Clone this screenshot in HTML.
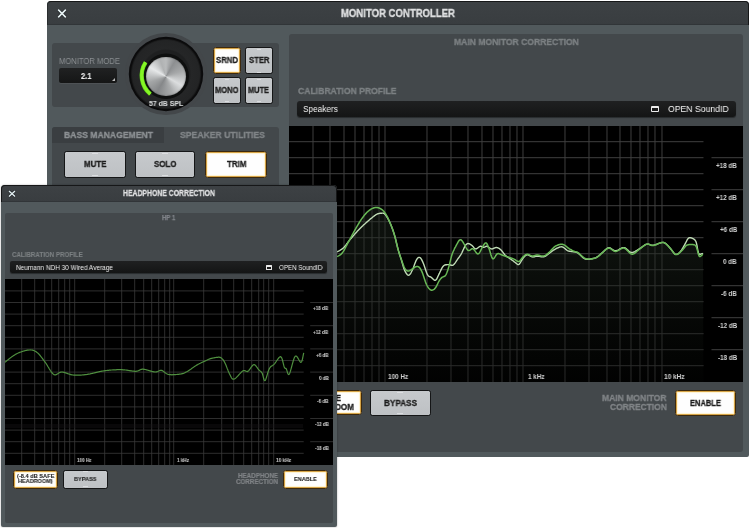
<!DOCTYPE html>
<html><head><meta charset="utf-8"><style>
html,body{margin:0;padding:0;}
body{width:750px;height:528px;position:relative;overflow:hidden;background:#fff;font-family:"Liberation Sans",sans-serif;}
.t{position:absolute;white-space:nowrap;will-change:transform;}
</style></head><body>
<div style="position:absolute;left:47px;top:1px;width:702px;height:456px;background:#51595c;border-radius:4px 4px 2px 2px;"></div>
<div style="position:absolute;left:47px;top:1px;width:702px;height:23.7px;background:linear-gradient(#3d4144,#393d40);border-radius:4px 4px 0 0;box-sizing:border-box;border:1.5px solid #161718;border-bottom:none;border-left-color:#2a2d2f;box-shadow:inset 0 -1px 0 #313538"></div>
<svg style="position:absolute;left:50px;top:2px" width="22" height="22" viewBox="50 2 22 22"><path d="M58.2,9.7 L65.8,17.3 M65.8,9.7 L58.2,17.3" stroke="#1b1e20" stroke-width="3" stroke-linecap="butt"/><path d="M58.2,9.7 L65.8,17.3 M65.8,9.7 L58.2,17.3" stroke="#e6f1f3" stroke-width="1.7" stroke-linecap="butt"/></svg>
<div class="t" style="left:341.00px;top:7.61px;font-size:10.61px;line-height:10.61px;font-weight:bold;color:#dedfe0;transform:scaleX(0.901);transform-origin:0 0;-webkit-text-stroke:0.37px #dedfe0;">MONITOR CONTROLLER</div>
<div style="position:absolute;left:52px;top:43px;width:227px;height:64px;background:#43484b;border-radius:3px"></div>
<div class="t" style="left:59.00px;top:57.81px;font-size:8.14px;line-height:8.14px;font-weight:normal;color:#8b8f92;transform:scaleX(0.939);transform-origin:0 0;">MONITOR MODE</div>
<div style="position:absolute;left:59px;top:68px;width:58px;height:15px;background:linear-gradient(#202122,#151616);border-radius:2px;box-shadow:0 1px 0 rgba(255,255,255,.06)"></div>
<div style="position:absolute;left:112px;top:78px;width:0;height:0;border-left:3px solid transparent;border-bottom:3px solid #bbb"></div>
<div class="t" style="left:81.45px;top:71.81px;font-size:8.72px;line-height:8.72px;font-weight:bold;color:#f0f0f0;transform:scaleX(0.866);transform-origin:0 0;-webkit-text-stroke:0.10px #f0f0f0;">2.1</div>
<svg style="position:absolute;left:120px;top:28px" width="95" height="95" viewBox="120 28 95 95">
<defs>
<radialGradient id="ring" cx="166" cy="74" r="36" gradientUnits="userSpaceOnUse"><stop offset="0" stop-color="#1e1f20"/><stop offset="0.66" stop-color="#1e1f20"/><stop offset="0.7" stop-color="#252627"/><stop offset="0.93" stop-color="#232425"/><stop offset="1" stop-color="#0c0c0c"/></radialGradient>
<filter id="glow" x="-50%" y="-50%" width="200%" height="200%"><feGaussianBlur stdDeviation="0.6"/></filter>
</defs>
<circle cx="166" cy="74" r="41" fill="#43474a"/>
<circle cx="166" cy="74" r="37.2" fill="#0b0b0c"/>
<circle cx="166" cy="74" r="35.3" fill="url(#ring)"/>
<circle cx="166.1" cy="76.3" r="22.8" fill="#0e0f0f"/>
<path d="M150.38,94.11 A24.3,24.3 0 0 1 145.62,62.27" stroke="#62d616" stroke-width="4.2" fill="none" filter="url(#glow)"/>
<path d="M150.38,94.11 A24.3,24.3 0 0 1 145.62,62.27" stroke="#86f526" stroke-width="3" fill="none"/>
</svg>
<div style="position:absolute;left:146.3px;top:56.6px;width:39.6px;height:39.6px;border-radius:50%;background:conic-gradient(from 0deg,#b9bbbc,#8d8f91 30deg,#a6a8a9 70deg,#dcdedf 120deg,#a9abac 160deg,#858789 210deg,#a3a5a6 250deg,#e6e8e9 300deg,#b0b2b3 340deg,#b9bbbc);box-shadow:inset 0 0 1.5px rgba(0,0,0,.6)"></div>
<div class="t" style="left:148.90px;top:99.80px;font-size:7.56px;line-height:7.56px;font-weight:bold;color:#d4d6d7;transform:scaleX(0.915);transform-origin:0 0;-webkit-text-stroke:0.10px #d4d6d7;">57 dB SPL</div>
<div style="position:absolute;left:213px;top:47.4px;width:27.80000000000001px;height:26.9px;box-sizing:border-box;border:1px solid #3e2a0e;border-radius:2.5px;background:#fefefe;box-shadow:inset 0 0 0 1px #d6a446,inset 0 0 1px 2px #fff3d2"></div>
<div class="t" style="left:215.90px;top:56.76px;font-size:8.14px;line-height:8.14px;font-weight:bold;color:#1e1e1e;transform:scaleX(0.954);transform-origin:0 0;-webkit-text-stroke:0.28px #1e1e1e;">SRND</div>
<div style="position:absolute;left:244.9px;top:47.4px;width:27.900000000000006px;height:26.9px;box-sizing:border-box;border:1.8px solid #151617;border-radius:2.5px;background:linear-gradient(#c6c9cc,#bec1c4)"></div>
<div style="position:absolute;left:257.1px;top:49.199999999999996px;width:3.5px;height:1.0px;background:#e2e4e6;opacity:.8"></div>
<div style="position:absolute;left:257.1px;top:71.5px;width:3.5px;height:1.0px;background:#e2e4e6;opacity:.8"></div>
<div class="t" style="left:248.60px;top:56.76px;font-size:8.14px;line-height:8.14px;font-weight:bold;color:#1e1e1e;transform:scaleX(0.944);transform-origin:0 0;-webkit-text-stroke:0.28px #1e1e1e;">STER</div>
<div style="position:absolute;left:213px;top:77.3px;width:27.80000000000001px;height:26.900000000000006px;box-sizing:border-box;border:1.8px solid #151617;border-radius:2.5px;background:linear-gradient(#c6c9cc,#bec1c4)"></div>
<div style="position:absolute;left:225.15px;top:79.1px;width:3.5px;height:1.0px;background:#e2e4e6;opacity:.8"></div>
<div style="position:absolute;left:225.15px;top:101.4px;width:3.5px;height:1.0px;background:#e2e4e6;opacity:.8"></div>
<div class="t" style="left:215.15px;top:86.66px;font-size:8.14px;line-height:8.14px;font-weight:bold;color:#1e1e1e;transform:scaleX(0.928);transform-origin:0 0;-webkit-text-stroke:0.28px #1e1e1e;">MONO</div>
<div style="position:absolute;left:244.9px;top:77.3px;width:27.900000000000006px;height:26.900000000000006px;box-sizing:border-box;border:1.8px solid #151617;border-radius:2.5px;background:linear-gradient(#c6c9cc,#bec1c4)"></div>
<div style="position:absolute;left:257.1px;top:79.1px;width:3.5px;height:1.0px;background:#e2e4e6;opacity:.8"></div>
<div style="position:absolute;left:257.1px;top:101.4px;width:3.5px;height:1.0px;background:#e2e4e6;opacity:.8"></div>
<div class="t" style="left:248.35px;top:86.66px;font-size:8.14px;line-height:8.14px;font-weight:bold;color:#1e1e1e;transform:scaleX(0.911);transform-origin:0 0;-webkit-text-stroke:0.28px #1e1e1e;">MUTE</div>
<div style="position:absolute;left:52px;top:127px;width:227px;height:73px;background:#43484b;border-radius:3px 3px 0 0"></div>
<div style="position:absolute;left:52px;top:127px;width:112px;height:16px;background:#3a3e41;border-radius:3px 0 0 0"></div>
<div class="t" style="left:64.30px;top:130.30px;font-size:9.45px;line-height:9.45px;font-weight:bold;color:#8d9194;transform:scaleX(0.912);transform-origin:0 0;-webkit-text-stroke:0.33px #8d9194;">BASS MANAGEMENT</div>
<div class="t" style="left:180.00px;top:130.30px;font-size:9.45px;line-height:9.45px;font-weight:bold;color:#818588;transform:scaleX(0.915);transform-origin:0 0;-webkit-text-stroke:0.33px #818588;">SPEAKER UTILITIES</div>
<div style="position:absolute;left:64px;top:151px;width:61.5px;height:26.5px;box-sizing:border-box;border:1.8px solid #151617;border-radius:2.5px;background:linear-gradient(#c6c9cc,#bec1c4)"></div>
<div style="position:absolute;left:91.675px;top:152.8px;width:6.150000000000006px;height:1.0px;background:#e2e4e6;opacity:.8"></div>
<div style="position:absolute;left:91.675px;top:174.7px;width:6.150000000000006px;height:1.0px;background:#e2e4e6;opacity:.8"></div>
<div class="t" style="left:83.50px;top:159.72px;font-size:9.01px;line-height:9.01px;font-weight:bold;color:#1e1e1e;transform:scaleX(0.881);transform-origin:0 0;-webkit-text-stroke:0.32px #1e1e1e;">MUTE</div>
<div style="position:absolute;left:135.2px;top:151px;width:60.30000000000001px;height:26.5px;box-sizing:border-box;border:1.8px solid #151617;border-radius:2.5px;background:linear-gradient(#c6c9cc,#bec1c4)"></div>
<div style="position:absolute;left:162.33499999999998px;top:152.8px;width:6.03000000000003px;height:1.0px;background:#e2e4e6;opacity:.8"></div>
<div style="position:absolute;left:162.33499999999998px;top:174.7px;width:6.03000000000003px;height:1.0px;background:#e2e4e6;opacity:.8"></div>
<div class="t" style="left:154.10px;top:159.72px;font-size:9.01px;line-height:9.01px;font-weight:bold;color:#1e1e1e;transform:scaleX(0.881);transform-origin:0 0;-webkit-text-stroke:0.32px #1e1e1e;">SOLO</div>
<div style="position:absolute;left:205.3px;top:151px;width:61.89999999999998px;height:26.5px;box-sizing:border-box;border:1px solid #3e2a0e;border-radius:2.5px;background:#fefefe;box-shadow:inset 0 0 0 1px #d6a446,inset 0 0 1px 2px #fff3d2"></div>
<div class="t" style="left:226.50px;top:159.72px;font-size:9.01px;line-height:9.01px;font-weight:bold;color:#1e1e1e;transform:scaleX(0.885);transform-origin:0 0;-webkit-text-stroke:0.32px #1e1e1e;">TRIM</div>
<div style="position:absolute;left:288.5px;top:33.5px;width:454.9px;height:418.1px;background:#43484b;border-radius:3px"></div>
<div class="t" style="left:453.50px;top:36.80px;font-size:9.45px;line-height:9.45px;font-weight:bold;color:#7c8083;transform:scaleX(0.910);transform-origin:0 0;-webkit-text-stroke:0.33px #7c8083;">MAIN MONITOR CORRECTION</div>
<div class="t" style="left:298.00px;top:86.72px;font-size:9.30px;line-height:9.30px;font-weight:bold;color:#7c8083;transform:scaleX(0.927);transform-origin:0 0;-webkit-text-stroke:0.33px #7c8083;">CALIBRATION PROFILE</div>
<div style="position:absolute;left:297px;top:101px;width:438.5px;height:15.5px;background:linear-gradient(#1f2021,#141515);border-radius:3px;box-shadow:0 1px 1px rgba(0,0,0,.4)"></div>
<div class="t" style="left:302.70px;top:103.93px;font-size:9.88px;line-height:9.88px;font-weight:normal;color:#f4f4f4;transform:scaleX(0.838);transform-origin:0 0;">Speakers</div>
<div class="t" style="left:667.70px;top:103.63px;font-size:9.88px;line-height:9.88px;font-weight:normal;color:#f4f4f4;transform:scaleX(0.878);transform-origin:0 0;">OPEN SoundID</div>
<div style="position:absolute;left:650.6px;top:105.9px;width:8.2px;height:6.6px;box-sizing:border-box;border:1.3px solid #ececec;border-top-width:2.6px;border-radius:1px;background:#1a1a1a"></div>
<svg style="position:absolute;left:288.5px;top:125.8px" width="454.9" height="256.4" viewBox="288.5 125.8 454.9 256.4"><defs><linearGradient id="fgm" x1="0" y1="248.5" x2="0" y2="382.2" gradientUnits="userSpaceOnUse"><stop offset="0" stop-color="#1c241c" stop-opacity="0.46"/><stop offset="1" stop-color="#040504" stop-opacity="0.37"/></linearGradient></defs><rect x="288.5" y="125.8" width="454.9" height="256.4" fill="#000"/><path d="M312.50,125.8V382.2M329.50,125.8V382.2M343.50,125.8V382.2M354.50,125.8V382.2M363.50,125.8V382.2M371.50,125.8V382.2M378.50,125.8V382.2M384.50,125.8V382.2M426.50,125.8V382.2M450.50,125.8V382.2M467.50,125.8V382.2M481.50,125.8V382.2M492.50,125.8V382.2M501.50,125.8V382.2M509.50,125.8V382.2M516.50,125.8V382.2M522.50,125.8V382.2M564.50,125.8V382.2M588.50,125.8V382.2M606.50,125.8V382.2M619.50,125.8V382.2M630.50,125.8V382.2M639.50,125.8V382.2M647.50,125.8V382.2M654.50,125.8V382.2M661.50,125.8V382.2M288.5,141.50H703M288.5,157.50H703M288.5,173.50H703M288.5,189.50H703M288.5,205.50H703M288.5,221.50H703M288.5,237.50H703M288.5,253.50H703M288.5,269.50H703M288.5,285.50H703M288.5,301.50H703M288.5,317.50H703M288.5,333.50H703M288.5,349.50H703M288.5,365.50H703M711,157.50H743.4M711,189.50H743.4M711,221.50H743.4M711,253.50H743.4M711,285.50H743.4M711,317.50H743.4M711,349.50H743.4" stroke="#3f3f3f" stroke-width="1.0" fill="none"/><path d="M288.0,262.0 288.5,262.1 289.0,262.1 289.5,262.2 290.0,262.3 290.5,262.3 291.0,262.4 291.5,262.5 292.0,262.5 292.5,262.6 293.0,262.7 293.5,262.8 294.0,262.8 294.5,262.9 295.0,263.0 295.5,263.1 296.0,263.1 296.5,263.2 297.0,263.3 297.5,263.3 298.0,263.4 298.5,263.5 299.0,263.5 299.5,263.6 300.0,263.6 300.5,263.7 301.0,263.8 301.5,263.8 302.0,263.8 302.5,263.9 303.0,263.9 303.5,264.0 304.0,264.0 304.5,264.0 305.0,264.1 305.5,264.1 306.0,264.1 306.5,264.1 307.0,264.1 307.5,264.1 308.0,264.1 308.5,264.1 309.0,264.1 309.5,264.0 310.0,264.0 310.5,263.9 311.0,263.9 311.5,263.8 312.0,263.7 312.5,263.6 313.0,263.5 313.5,263.4 314.0,263.3 314.5,263.2 315.0,263.1 315.5,263.0 316.0,262.8 316.5,262.7 317.0,262.6 317.5,262.4 318.0,262.3 318.5,262.1 319.0,261.9 319.5,261.8 320.0,261.6 320.5,261.4 321.0,261.3 321.5,261.1 322.0,260.9 322.5,260.7 323.0,260.6 323.5,260.4 324.0,260.2 324.5,260.0 325.0,259.8 325.5,259.6 326.0,259.4 326.5,259.2 327.0,259.1 327.5,258.9 328.0,258.7 328.5,258.5 329.0,258.3 329.5,258.2 330.0,258.0 330.5,257.8 331.0,257.7 331.5,257.6 332.0,257.4 332.5,257.3 333.0,257.2 333.5,257.0 334.0,256.9 334.5,256.8 335.0,256.7 335.5,256.5 336.0,256.4 336.5,256.2 337.0,256.1 337.5,255.9 338.0,255.7 338.5,255.4 339.0,255.2 339.5,254.8 340.0,254.5 340.5,254.0 341.0,253.6 341.5,253.0 342.0,252.4 342.5,251.7 343.0,250.9 343.5,250.1 344.0,249.2 344.5,248.3 345.0,247.3 345.5,246.3 346.0,245.4 346.5,244.4 347.0,243.5 347.5,242.5 348.0,241.6 348.5,240.7 349.0,239.8 349.5,238.9 350.0,238.0 350.5,237.0 351.0,236.1 351.5,235.1 352.0,234.2 352.5,233.3 353.0,232.4 353.5,231.5 354.0,230.6 354.5,229.7 355.0,228.8 355.5,227.9 356.0,227.0 356.5,226.2 357.0,225.3 357.5,224.5 358.0,223.6 358.5,222.8 359.0,222.0 359.5,221.2 360.0,220.4 360.5,219.6 361.0,218.9 361.5,218.2 362.0,217.5 362.5,216.8 363.0,216.2 363.5,215.5 364.0,214.9 364.5,214.3 365.0,213.7 365.5,213.2 366.0,212.6 366.5,212.1 367.0,211.6 367.5,211.2 368.0,210.8 368.5,210.4 369.0,210.0 369.5,209.6 370.0,209.3 370.5,209.0 371.0,208.7 371.5,208.4 372.0,208.2 372.5,208.0 373.0,207.8 373.5,207.6 374.0,207.5 374.5,207.4 375.0,207.3 375.5,207.2 376.0,207.2 376.5,207.3 377.0,207.3 377.5,207.5 378.0,207.6 378.5,207.8 379.0,208.0 379.5,208.2 380.0,208.5 380.5,208.8 381.0,209.1 381.5,209.4 382.0,209.8 382.5,210.3 383.0,210.8 383.5,211.4 384.0,212.0 384.5,212.7 385.0,213.4 385.5,214.2 386.0,215.1 386.5,216.0 387.0,217.0 387.5,218.0 388.0,219.1 388.5,220.2 389.0,221.4 389.5,222.6 390.0,223.8 390.5,225.0 391.0,226.3 391.5,227.6 392.0,228.9 392.5,230.3 393.0,231.8 393.5,233.3 394.0,235.0 394.5,236.7 395.0,238.7 395.5,240.7 396.0,242.9 396.5,245.0 397.0,247.0 397.5,248.9 398.0,250.7 398.5,252.3 399.0,253.9 399.5,255.3 400.0,256.8 400.5,258.2 401.0,259.6 401.5,261.1 402.0,262.5 402.5,264.0 403.0,265.3 403.5,266.6 404.0,267.6 404.5,268.5 405.0,269.3 405.5,269.9 406.0,270.3 406.5,270.6 407.0,270.7 407.5,270.8 408.0,270.8 408.5,270.7 409.0,270.5 409.5,270.2 410.0,269.9 410.5,269.6 411.0,269.3 411.5,268.9 412.0,268.6 412.5,268.3 413.0,267.9 413.5,267.6 414.0,267.3 414.5,267.0 415.0,266.7 415.5,266.5 416.0,266.4 416.5,266.3 417.0,266.3 417.5,266.4 418.0,266.6 418.5,266.9 419.0,267.4 419.5,268.0 420.0,268.7 420.5,269.6 421.0,270.6 421.5,271.7 422.0,272.9 422.5,274.2 423.0,275.7 423.5,277.2 424.0,278.8 424.5,280.4 425.0,281.9 425.5,283.2 426.0,284.3 426.5,285.3 427.0,286.2 427.5,287.0 428.0,287.7 428.5,288.3 429.0,288.8 429.5,289.3 430.0,289.6 430.5,289.9 431.0,290.0 431.5,290.0 432.0,289.9 432.5,289.7 433.0,289.4 433.5,289.1 434.0,288.7 434.5,288.2 435.0,287.6 435.5,286.8 436.0,285.9 436.5,284.9 437.0,283.9 437.5,282.8 438.0,281.8 438.5,280.9 439.0,280.1 439.5,279.4 440.0,278.8 440.5,278.2 441.0,277.7 441.5,277.2 442.0,276.9 442.5,276.7 443.0,276.5 443.5,276.3 444.0,276.1 444.5,275.8 445.0,275.2 445.5,274.4 446.0,273.4 446.5,272.1 447.0,270.7 447.5,269.2 448.0,267.6 448.5,265.9 449.0,264.0 449.5,262.0 450.0,259.9 450.5,257.9 451.0,256.0 451.5,254.4 452.0,253.0 452.5,251.8 453.0,250.6 453.5,249.6 454.0,248.5 454.5,247.5 455.0,246.6 455.5,245.6 456.0,244.7 456.5,243.8 457.0,242.9 457.5,242.0 458.0,241.1 458.5,240.4 459.0,239.9 459.5,239.6 460.0,239.5 460.5,239.6 461.0,240.0 461.5,240.5 462.0,241.2 462.5,242.0 463.0,242.8 463.5,243.7 464.0,244.5 464.5,245.4 465.0,246.3 465.5,247.3 466.0,248.2 466.5,249.0 467.0,249.7 467.5,250.1 468.0,250.4 468.5,250.4 469.0,250.2 469.5,249.9 470.0,249.5 470.5,249.1 471.0,248.8 471.5,248.5 472.0,248.5 472.5,248.6 473.0,248.9 473.5,249.4 474.0,250.0 474.5,250.7 475.0,251.4 475.5,252.1 476.0,252.7 476.5,253.3 477.0,253.6 477.5,253.7 478.0,253.5 478.5,253.1 479.0,252.4 479.5,251.6 480.0,250.6 480.5,249.6 481.0,248.6 481.5,247.7 482.0,246.9 482.5,246.0 483.0,245.1 483.5,244.3 484.0,243.6 484.5,243.0 485.0,242.7 485.5,242.7 486.0,243.0 486.5,243.6 487.0,244.6 487.5,245.7 488.0,247.0 488.5,248.4 489.0,249.8 489.5,251.4 490.0,253.1 490.5,254.8 491.0,256.3 491.5,257.5 492.0,258.3 492.5,258.6 493.0,258.6 493.5,258.1 494.0,257.5 494.5,256.7 495.0,255.8 495.5,255.0 496.0,254.4 496.5,253.8 497.0,253.5 497.5,253.4 498.0,253.4 498.5,253.5 499.0,253.7 499.5,253.9 500.0,254.1 500.5,254.4 501.0,254.6 501.5,254.8 502.0,255.0 502.5,255.2 503.0,255.3 503.5,255.5 504.0,255.7 504.5,255.8 505.0,256.0 505.5,256.2 506.0,256.3 506.5,256.5 507.0,256.6 507.5,256.8 508.0,256.9 508.5,257.1 509.0,257.2 509.5,257.4 510.0,257.6 510.5,257.7 511.0,257.9 511.5,258.1 512.0,258.2 512.5,258.4 513.0,258.7 513.5,258.9 514.0,259.2 514.5,259.5 515.0,259.8 515.5,260.2 516.0,260.5 516.5,260.8 517.0,261.0 517.5,261.2 518.0,261.3 518.5,261.2 519.0,261.0 519.5,260.5 520.0,259.9 520.5,259.2 521.0,258.5 521.5,257.8 522.0,257.3 522.5,256.7 523.0,256.2 523.5,255.8 524.0,255.3 524.5,255.0 525.0,254.6 525.5,254.4 526.0,254.2 526.5,254.1 527.0,254.1 527.5,254.2 528.0,254.3 528.5,254.5 529.0,254.7 529.5,255.0 530.0,255.2 530.5,255.4 531.0,255.6 531.5,255.7 532.0,255.8 532.5,255.8 533.0,255.8 533.5,255.6 534.0,255.5 534.5,255.3 535.0,255.1 535.5,255.0 536.0,254.9 536.5,254.9 537.0,254.9 537.5,254.9 538.0,255.0 538.5,255.1 539.0,255.3 539.5,255.4 540.0,255.6 540.5,255.7 541.0,255.8 541.5,255.9 542.0,255.9 542.5,255.9 543.0,255.9 543.5,255.8 544.0,255.6 544.5,255.4 545.0,255.1 545.5,254.8 546.0,254.4 546.5,254.0 547.0,253.6 547.5,253.2 548.0,252.7 548.5,252.2 549.0,251.8 549.5,251.3 550.0,250.8 550.5,250.2 551.0,249.7 551.5,249.1 552.0,248.5 552.5,248.0 553.0,247.5 553.5,247.0 554.0,246.6 554.5,246.2 555.0,245.9 555.5,245.6 556.0,245.4 556.5,245.2 557.0,245.0 557.5,244.8 558.0,244.6 558.5,244.4 559.0,244.3 559.5,244.2 560.0,244.1 560.5,244.1 561.0,244.1 561.5,244.1 562.0,244.1 562.5,244.2 563.0,244.4 563.5,244.6 564.0,244.9 564.5,245.2 565.0,245.6 565.5,246.0 566.0,246.4 566.5,246.8 567.0,247.2 567.5,247.6 568.0,248.0 568.5,248.3 569.0,248.7 569.5,249.0 570.0,249.2 570.5,249.5 571.0,249.8 571.5,250.1 572.0,250.4 572.5,250.6 573.0,250.9 573.5,251.1 574.0,251.3 574.5,251.5 575.0,251.6 575.5,251.7 576.0,251.8 576.5,251.9 577.0,252.1 577.5,252.4 578.0,252.7 578.5,253.1 579.0,253.6 579.5,254.1 580.0,254.5 580.5,255.0 581.0,255.5 581.5,256.0 582.0,256.4 582.5,256.8 583.0,257.2 583.5,257.6 584.0,257.9 584.5,258.1 585.0,258.4 585.5,258.6 586.0,258.7 586.5,258.8 587.0,258.8 587.5,258.9 588.0,258.9 588.5,258.9 589.0,258.9 589.5,258.8 590.0,258.8 590.5,258.7 591.0,258.7 591.5,258.6 592.0,258.5 592.5,258.4 593.0,258.3 593.5,258.2 594.0,258.1 594.5,257.9 595.0,257.7 595.5,257.5 596.0,257.3 596.5,257.1 597.0,256.7 597.5,256.4 598.0,256.0 598.5,255.6 599.0,255.1 599.5,254.7 600.0,254.2 600.5,253.8 601.0,253.3 601.5,252.9 602.0,252.5 602.5,252.0 603.0,251.6 603.5,251.1 604.0,250.6 604.5,250.1 605.0,249.7 605.5,249.3 606.0,248.9 606.5,248.6 607.0,248.3 607.5,248.1 608.0,247.9 608.5,247.9 609.0,248.0 609.5,248.1 610.0,248.4 610.5,248.7 611.0,249.1 611.5,249.5 612.0,249.8 612.5,250.2 613.0,250.5 613.5,250.8 614.0,251.0 614.5,251.2 615.0,251.2 615.5,251.2 616.0,251.1 616.5,250.9 617.0,250.7 617.5,250.4 618.0,250.1 618.5,249.8 619.0,249.5 619.5,249.2 620.0,248.9 620.5,248.6 621.0,248.4 621.5,248.1 622.0,248.0 622.5,247.9 623.0,247.8 623.5,247.9 624.0,248.0 624.5,248.3 625.0,248.6 625.5,249.0 626.0,249.4 626.5,249.9 627.0,250.4 627.5,251.0 628.0,251.5 628.5,252.0 629.0,252.5 629.5,253.0 630.0,253.4 630.5,253.7 631.0,253.9 631.5,254.0 632.0,254.0 632.5,253.9 633.0,253.7 633.5,253.5 634.0,253.2 634.5,252.8 635.0,252.4 635.5,252.0 636.0,251.5 636.5,251.1 637.0,250.6 637.5,250.2 638.0,249.7 638.5,249.3 639.0,248.9 639.5,248.6 640.0,248.2 640.5,247.8 641.0,247.4 641.5,247.0 642.0,246.6 642.5,246.2 643.0,245.8 643.5,245.4 644.0,245.1 644.5,244.8 645.0,244.5 645.5,244.2 646.0,244.1 646.5,243.9 647.0,243.9 647.5,243.9 648.0,244.0 648.5,244.2 649.0,244.4 649.5,244.6 650.0,244.8 650.5,245.0 651.0,245.2 651.5,245.3 652.0,245.4 652.5,245.3 653.0,245.3 653.5,245.2 654.0,245.0 654.5,244.9 655.0,244.7 655.5,244.5 656.0,244.3 656.5,244.1 657.0,243.8 657.5,243.6 658.0,243.4 658.5,243.2 659.0,243.0 659.5,242.8 660.0,242.6 660.5,242.5 661.0,242.4 661.5,242.3 662.0,242.2 662.5,242.2 663.0,242.3 663.5,242.4 664.0,242.6 664.5,242.9 665.0,243.2 665.5,243.6 666.0,244.0 666.5,244.5 667.0,245.0 667.5,245.5 668.0,246.1 668.5,246.7 669.0,247.2 669.5,247.8 670.0,248.4 670.5,249.0 671.0,249.7 671.5,250.3 672.0,251.0 672.5,251.7 673.0,252.4 673.5,253.1 674.0,253.6 674.5,254.0 675.0,254.3 675.5,254.4 676.0,254.4 676.5,254.3 677.0,254.1 677.5,253.8 678.0,253.5 678.5,253.1 679.0,252.7 679.5,252.2 680.0,251.8 680.5,251.3 681.0,250.8 681.5,250.3 682.0,249.7 682.5,249.2 683.0,248.6 683.5,248.0 684.0,247.4 684.5,246.7 685.0,246.1 685.5,245.5 686.0,245.1 686.5,244.9 687.0,244.7 687.5,244.6 688.0,244.5 688.5,244.4 689.0,244.4 689.5,244.4 690.0,244.3 690.5,244.3 691.0,244.3 691.5,244.3 692.0,244.4 692.5,244.4 693.0,244.5 693.5,244.5 694.0,244.7 694.5,244.9 695.0,245.3 695.5,246.0 696.0,247.0 696.5,248.5 697.0,250.4 697.5,252.4 698.0,254.3 698.5,255.6 699.0,256.3 699.5,256.4 700.0,256.1 700.5,255.7 701.0,255.3 701.5,254.8 702.0,254.5 702.5,254.2 L702.9,382.2 L288.0,382.2 Z" fill="url(#fgm)"/><path d="M288.0,256.0 288.5,256.0 289.0,256.1 289.5,256.1 290.0,256.1 290.5,256.2 291.0,256.2 291.5,256.2 292.0,256.3 292.5,256.3 293.0,256.3 293.5,256.4 294.0,256.4 294.5,256.5 295.0,256.5 295.5,256.5 296.0,256.6 296.5,256.6 297.0,256.6 297.5,256.7 298.0,256.7 298.5,256.7 299.0,256.8 299.5,256.8 300.0,256.8 300.5,256.9 301.0,256.9 301.5,256.9 302.0,256.9 302.5,256.9 303.0,257.0 303.5,257.0 304.0,257.0 304.5,257.0 305.0,257.0 305.5,257.0 306.0,257.0 306.5,257.1 307.0,257.1 307.5,257.1 308.0,257.1 308.5,257.0 309.0,257.0 309.5,257.0 310.0,257.0 310.5,257.0 311.0,256.9 311.5,256.9 312.0,256.9 312.5,256.8 313.0,256.8 313.5,256.7 314.0,256.7 314.5,256.6 315.0,256.6 315.5,256.5 316.0,256.4 316.5,256.4 317.0,256.3 317.5,256.2 318.0,256.2 318.5,256.1 319.0,256.0 319.5,255.9 320.0,255.9 320.5,255.8 321.0,255.7 321.5,255.6 322.0,255.5 322.5,255.4 323.0,255.4 323.5,255.3 324.0,255.2 324.5,255.1 325.0,255.0 325.5,254.9 326.0,254.8 326.5,254.7 327.0,254.6 327.5,254.5 328.0,254.4 328.5,254.3 329.0,254.2 329.5,254.1 330.0,254.0 330.5,253.9 331.0,253.8 331.5,253.7 332.0,253.5 332.5,253.4 333.0,253.2 333.5,253.1 334.0,252.8 334.5,252.6 335.0,252.3 335.5,252.1 336.0,251.8 336.5,251.6 337.0,251.3 337.5,251.1 338.0,250.9 338.5,250.6 339.0,250.4 339.5,250.1 340.0,249.8 340.5,249.5 341.0,249.2 341.5,248.8 342.0,248.4 342.5,248.0 343.0,247.6 343.5,247.1 344.0,246.5 344.5,245.9 345.0,245.3 345.5,244.7 346.0,244.0 346.5,243.3 347.0,242.7 347.5,242.0 348.0,241.3 348.5,240.7 349.0,240.0 349.5,239.4 350.0,238.8 350.5,238.2 351.0,237.7 351.5,237.1 352.0,236.5 352.5,235.9 353.0,235.3 353.5,234.8 354.0,234.2 354.5,233.6 355.0,233.1 355.5,232.5 356.0,232.0 356.5,231.4 357.0,230.9 357.5,230.4 358.0,229.8 358.5,229.3 359.0,228.8 359.5,228.3 360.0,227.8 360.5,227.3 361.0,226.8 361.5,226.3 362.0,225.8 362.5,225.4 363.0,224.9 363.5,224.4 364.0,224.0 364.5,223.5 365.0,223.1 365.5,222.6 366.0,222.2 366.5,221.7 367.0,221.3 367.5,220.9 368.0,220.4 368.5,220.0 369.0,219.6 369.5,219.1 370.0,218.7 370.5,218.3 371.0,217.9 371.5,217.5 372.0,217.0 372.5,216.6 373.0,216.3 373.5,215.9 374.0,215.5 374.5,215.2 375.0,214.8 375.5,214.5 376.0,214.2 376.5,214.0 377.0,213.7 377.5,213.5 378.0,213.4 378.5,213.3 379.0,213.2 379.5,213.1 380.0,213.1 380.5,213.0 381.0,213.0 381.5,212.9 382.0,212.9 382.5,212.9 383.0,213.0 383.5,213.3 384.0,213.6 384.5,214.1 385.0,214.7 385.5,215.4 386.0,216.1 386.5,216.9 387.0,217.7 387.5,218.6 388.0,219.5 388.5,220.5 389.0,221.5 389.5,222.6 390.0,223.7 390.5,224.9 391.0,226.1 391.5,227.5 392.0,228.8 392.5,230.2 393.0,231.7 393.5,233.3 394.0,234.9 394.5,236.7 395.0,238.7 395.5,240.7 396.0,242.8 396.5,245.0 397.0,247.0 397.5,248.9 398.0,250.7 398.5,252.4 399.0,254.0 399.5,255.5 400.0,257.1 400.5,258.6 401.0,260.2 401.5,261.9 402.0,263.6 402.5,265.3 403.0,267.0 403.5,268.5 404.0,269.8 404.5,271.0 405.0,271.9 405.5,272.8 406.0,273.5 406.5,274.2 407.0,274.6 407.5,274.9 408.0,275.0 408.5,274.9 409.0,274.6 409.5,274.1 410.0,273.4 410.5,272.6 411.0,271.6 411.5,270.6 412.0,269.6 412.5,268.4 413.0,267.2 413.5,265.8 414.0,264.4 414.5,263.0 415.0,261.7 415.5,260.5 416.0,259.6 416.5,258.8 417.0,258.1 417.5,257.6 418.0,257.3 418.5,257.2 419.0,257.2 419.5,257.4 420.0,257.8 420.5,258.5 421.0,259.2 421.5,260.2 422.0,261.2 422.5,262.3 423.0,263.6 423.5,264.9 424.0,266.4 424.5,267.9 425.0,269.4 425.5,270.8 426.0,272.2 426.5,273.4 427.0,274.4 427.5,275.2 428.0,275.8 428.5,276.1 429.0,276.4 429.5,276.5 430.0,276.7 430.5,277.0 431.0,277.4 431.5,277.8 432.0,278.3 432.5,278.8 433.0,279.3 433.5,279.7 434.0,280.0 434.5,280.1 435.0,280.0 435.5,279.7 436.0,279.1 436.5,278.2 437.0,277.2 437.5,276.1 438.0,275.0 438.5,273.9 439.0,272.9 439.5,271.8 440.0,270.8 440.5,269.7 441.0,268.7 441.5,267.8 442.0,267.0 442.5,266.3 443.0,265.7 443.5,265.3 444.0,265.0 444.5,264.8 445.0,264.6 445.5,264.5 446.0,264.5 446.5,264.4 447.0,264.4 447.5,264.4 448.0,264.4 448.5,264.4 449.0,264.5 449.5,264.6 450.0,264.8 450.5,265.0 451.0,265.1 451.5,265.2 452.0,265.1 452.5,264.9 453.0,264.6 453.5,264.1 454.0,263.5 454.5,262.9 455.0,262.2 455.5,261.5 456.0,260.7 456.5,260.0 457.0,259.2 457.5,258.5 458.0,257.8 458.5,257.1 459.0,256.4 459.5,255.7 460.0,255.0 460.5,254.2 461.0,253.3 461.5,252.3 462.0,251.2 462.5,250.1 463.0,249.0 463.5,247.9 464.0,246.9 464.5,245.9 465.0,245.2 465.5,244.5 466.0,244.0 466.5,243.6 467.0,243.4 467.5,243.3 468.0,243.4 468.5,243.5 469.0,243.7 469.5,244.0 470.0,244.3 470.5,244.6 471.0,244.9 471.5,245.3 472.0,245.8 472.5,246.3 473.0,246.9 473.5,247.5 474.0,248.0 474.5,248.4 475.0,248.6 475.5,248.7 476.0,248.6 476.5,248.3 477.0,248.0 477.5,247.6 478.0,247.2 478.5,246.8 479.0,246.5 479.5,246.2 480.0,246.1 480.5,246.1 481.0,246.3 481.5,246.5 482.0,246.7 482.5,246.9 483.0,247.0 483.5,247.0 484.0,246.9 484.5,246.7 485.0,246.4 485.5,246.2 486.0,246.1 486.5,246.1 487.0,246.3 487.5,246.5 488.0,246.9 488.5,247.3 489.0,247.7 489.5,248.0 490.0,248.4 490.5,248.6 491.0,248.7 491.5,248.8 492.0,248.7 492.5,248.5 493.0,248.3 493.5,248.0 494.0,247.8 494.5,247.6 495.0,247.4 495.5,247.3 496.0,247.3 496.5,247.4 497.0,247.5 497.5,247.7 498.0,247.9 498.5,248.2 499.0,248.5 499.5,248.9 500.0,249.3 500.5,249.8 501.0,250.3 501.5,250.9 502.0,251.6 502.5,252.2 503.0,252.9 503.5,253.6 504.0,254.2 504.5,254.7 505.0,255.2 505.5,255.7 506.0,256.1 506.5,256.4 507.0,256.8 507.5,257.1 508.0,257.5 508.5,257.8 509.0,258.1 509.5,258.4 510.0,258.8 510.5,259.1 511.0,259.5 511.5,259.9 512.0,260.2 512.5,260.6 513.0,261.0 513.5,261.4 514.0,261.8 514.5,262.1 515.0,262.5 515.5,262.9 516.0,263.3 516.5,263.8 517.0,264.1 517.5,264.3 518.0,264.4 518.5,264.1 519.0,263.7 519.5,263.0 520.0,262.2 520.5,261.3 521.0,260.4 521.5,259.6 522.0,258.9 522.5,258.2 523.0,257.5 523.5,256.9 524.0,256.3 524.5,255.8 525.0,255.4 525.5,255.0 526.0,254.8 526.5,254.6 527.0,254.6 527.5,254.7 528.0,254.8 528.5,255.1 529.0,255.3 529.5,255.6 530.0,255.9 530.5,256.2 531.0,256.4 531.5,256.6 532.0,256.7 532.5,256.8 533.0,256.7 533.5,256.6 534.0,256.5 534.5,256.4 535.0,256.2 535.5,256.1 536.0,256.0 536.5,256.0 537.0,256.0 537.5,256.0 538.0,256.1 538.5,256.1 539.0,256.2 539.5,256.3 540.0,256.4 540.5,256.5 541.0,256.6 541.5,256.7 542.0,256.7 542.5,256.7 543.0,256.6 543.5,256.5 544.0,256.3 544.5,256.1 545.0,255.9 545.5,255.6 546.0,255.2 546.5,254.8 547.0,254.4 547.5,254.0 548.0,253.6 548.5,253.3 549.0,252.9 549.5,252.5 550.0,252.2 550.5,251.8 551.0,251.4 551.5,251.0 552.0,250.7 552.5,250.3 553.0,250.0 553.5,249.7 554.0,249.4 554.5,249.1 555.0,248.8 555.5,248.5 556.0,248.3 556.5,248.0 557.0,247.8 557.5,247.6 558.0,247.4 558.5,247.2 559.0,247.0 559.5,246.8 560.0,246.7 560.5,246.7 561.0,246.6 561.5,246.7 562.0,246.8 562.5,247.0 563.0,247.3 563.5,247.6 564.0,248.0 564.5,248.4 565.0,248.9 565.5,249.3 566.0,249.7 566.5,250.1 567.0,250.4 567.5,250.6 568.0,250.8 568.5,250.9 569.0,251.1 569.5,251.1 570.0,251.2 570.5,251.3 571.0,251.3 571.5,251.4 572.0,251.4 572.5,251.5 573.0,251.5 573.5,251.6 574.0,251.7 574.5,251.8 575.0,251.9 575.5,252.0 576.0,252.1 576.5,252.3 577.0,252.5 577.5,252.9 578.0,253.2 578.5,253.7 579.0,254.1 579.5,254.6 580.0,255.1 580.5,255.6 581.0,256.1 581.5,256.6 582.0,257.0 582.5,257.4 583.0,257.8 583.5,258.1 584.0,258.4 584.5,258.7 585.0,258.8 585.5,259.0 586.0,259.1 586.5,259.1 587.0,259.1 587.5,259.1 588.0,259.1 588.5,259.0 589.0,259.0 589.5,258.9 590.0,258.8 590.5,258.8 591.0,258.7 591.5,258.6 592.0,258.5 592.5,258.3 593.0,258.2 593.5,258.1 594.0,257.9 594.5,257.8 595.0,257.6 595.5,257.4 596.0,257.1 596.5,256.8 597.0,256.5 597.5,256.2 598.0,255.8 598.5,255.4 599.0,254.9 599.5,254.5 600.0,254.0 600.5,253.6 601.0,253.1 601.5,252.7 602.0,252.3 602.5,251.8 603.0,251.3 603.5,250.9 604.0,250.4 604.5,249.9 605.0,249.5 605.5,249.0 606.0,248.6 606.5,248.3 607.0,248.0 607.5,247.8 608.0,247.6 608.5,247.6 609.0,247.6 609.5,247.8 610.0,248.0 610.5,248.3 611.0,248.6 611.5,249.0 612.0,249.4 612.5,249.7 613.0,250.0 613.5,250.3 614.0,250.5 614.5,250.6 615.0,250.6 615.5,250.6 616.0,250.5 616.5,250.3 617.0,250.1 617.5,249.9 618.0,249.6 618.5,249.3 619.0,249.0 619.5,248.7 620.0,248.4 620.5,248.2 621.0,247.9 621.5,247.7 622.0,247.5 622.5,247.4 623.0,247.4 623.5,247.4 624.0,247.5 624.5,247.7 625.0,248.0 625.5,248.3 626.0,248.7 626.5,249.2 627.0,249.6 627.5,250.1 628.0,250.6 628.5,251.1 629.0,251.5 629.5,251.8 630.0,252.1 630.5,252.2 631.0,252.3 631.5,252.3 632.0,252.3 632.5,252.2 633.0,252.0 633.5,251.8 634.0,251.6 634.5,251.3 635.0,251.0 635.5,250.7 636.0,250.4 636.5,250.1 637.0,249.8 637.5,249.5 638.0,249.1 638.5,248.8 639.0,248.5 639.5,248.2 640.0,247.9 640.5,247.6 641.0,247.2 641.5,246.8 642.0,246.5 642.5,246.1 643.0,245.7 643.5,245.4 644.0,245.0 644.5,244.7 645.0,244.5 645.5,244.2 646.0,244.1 646.5,243.9 647.0,243.9 647.5,243.9 648.0,244.0 648.5,244.1 649.0,244.3 649.5,244.5 650.0,244.7 650.5,244.9 651.0,245.0 651.5,245.1 652.0,245.2 652.5,245.1 653.0,245.1 653.5,245.0 654.0,244.8 654.5,244.7 655.0,244.5 655.5,244.3 656.0,244.1 656.5,243.9 657.0,243.7 657.5,243.5 658.0,243.3 658.5,243.1 659.0,242.9 659.5,242.8 660.0,242.6 660.5,242.5 661.0,242.4 661.5,242.3 662.0,242.2 662.5,242.2 663.0,242.3 663.5,242.4 664.0,242.6 664.5,242.9 665.0,243.2 665.5,243.6 666.0,244.0 666.5,244.5 667.0,245.0 667.5,245.5 668.0,246.1 668.5,246.7 669.0,247.3 669.5,247.8 670.0,248.4 670.5,249.0 671.0,249.6 671.5,250.3 672.0,251.0 672.5,251.7 673.0,252.3 673.5,252.9 674.0,253.5 674.5,253.9 675.0,254.1 675.5,254.2 676.0,254.2 676.5,254.1 677.0,253.9 677.5,253.6 678.0,253.2 678.5,252.8 679.0,252.3 679.5,251.8 680.0,251.2 680.5,250.6 681.0,249.9 681.5,249.1 682.0,248.3 682.5,247.5 683.0,246.6 683.5,245.7 684.0,244.8 684.5,243.9 685.0,243.0 685.5,242.0 686.0,241.0 686.5,240.0 687.0,239.2 687.5,238.5 688.0,238.0 688.5,237.6 689.0,237.5 689.5,237.5 690.0,237.5 690.5,237.6 691.0,237.8 691.5,238.0 692.0,238.2 692.5,238.4 693.0,238.7 693.5,239.0 694.0,239.4 694.5,239.9 695.0,240.6 695.5,241.6 696.0,243.2 696.5,245.5 697.0,248.4 697.5,251.1 698.0,252.9 698.5,253.7 699.0,254.0 699.5,254.1 700.0,254.0 700.5,253.9 701.0,253.7 701.5,253.5 702.0,253.4 702.5,253.2" stroke="#c0dcb6" stroke-width="1.4" fill="none" stroke-linejoin="round"/><path d="M288.0,262.0 288.5,262.1 289.0,262.1 289.5,262.2 290.0,262.3 290.5,262.3 291.0,262.4 291.5,262.5 292.0,262.5 292.5,262.6 293.0,262.7 293.5,262.8 294.0,262.8 294.5,262.9 295.0,263.0 295.5,263.1 296.0,263.1 296.5,263.2 297.0,263.3 297.5,263.3 298.0,263.4 298.5,263.5 299.0,263.5 299.5,263.6 300.0,263.6 300.5,263.7 301.0,263.8 301.5,263.8 302.0,263.8 302.5,263.9 303.0,263.9 303.5,264.0 304.0,264.0 304.5,264.0 305.0,264.1 305.5,264.1 306.0,264.1 306.5,264.1 307.0,264.1 307.5,264.1 308.0,264.1 308.5,264.1 309.0,264.1 309.5,264.0 310.0,264.0 310.5,263.9 311.0,263.9 311.5,263.8 312.0,263.7 312.5,263.6 313.0,263.5 313.5,263.4 314.0,263.3 314.5,263.2 315.0,263.1 315.5,263.0 316.0,262.8 316.5,262.7 317.0,262.6 317.5,262.4 318.0,262.3 318.5,262.1 319.0,261.9 319.5,261.8 320.0,261.6 320.5,261.4 321.0,261.3 321.5,261.1 322.0,260.9 322.5,260.7 323.0,260.6 323.5,260.4 324.0,260.2 324.5,260.0 325.0,259.8 325.5,259.6 326.0,259.4 326.5,259.2 327.0,259.1 327.5,258.9 328.0,258.7 328.5,258.5 329.0,258.3 329.5,258.2 330.0,258.0 330.5,257.8 331.0,257.7 331.5,257.6 332.0,257.4 332.5,257.3 333.0,257.2 333.5,257.0 334.0,256.9 334.5,256.8 335.0,256.7 335.5,256.5 336.0,256.4 336.5,256.2 337.0,256.1 337.5,255.9 338.0,255.7 338.5,255.4 339.0,255.2 339.5,254.8 340.0,254.5 340.5,254.0 341.0,253.6 341.5,253.0 342.0,252.4 342.5,251.7 343.0,250.9 343.5,250.1 344.0,249.2 344.5,248.3 345.0,247.3 345.5,246.3 346.0,245.4 346.5,244.4 347.0,243.5 347.5,242.5 348.0,241.6 348.5,240.7 349.0,239.8 349.5,238.9 350.0,238.0 350.5,237.0 351.0,236.1 351.5,235.1 352.0,234.2 352.5,233.3 353.0,232.4 353.5,231.5 354.0,230.6 354.5,229.7 355.0,228.8 355.5,227.9 356.0,227.0 356.5,226.2 357.0,225.3 357.5,224.5 358.0,223.6 358.5,222.8 359.0,222.0 359.5,221.2 360.0,220.4 360.5,219.6 361.0,218.9 361.5,218.2 362.0,217.5 362.5,216.8 363.0,216.2 363.5,215.5 364.0,214.9 364.5,214.3 365.0,213.7 365.5,213.2 366.0,212.6 366.5,212.1 367.0,211.6 367.5,211.2 368.0,210.8 368.5,210.4 369.0,210.0 369.5,209.6 370.0,209.3 370.5,209.0 371.0,208.7 371.5,208.4 372.0,208.2 372.5,208.0 373.0,207.8 373.5,207.6 374.0,207.5 374.5,207.4 375.0,207.3 375.5,207.2 376.0,207.2 376.5,207.3 377.0,207.3 377.5,207.5 378.0,207.6 378.5,207.8 379.0,208.0 379.5,208.2 380.0,208.5 380.5,208.8 381.0,209.1 381.5,209.4 382.0,209.8 382.5,210.3 383.0,210.8 383.5,211.4 384.0,212.0 384.5,212.7 385.0,213.4 385.5,214.2 386.0,215.1 386.5,216.0 387.0,217.0 387.5,218.0 388.0,219.1 388.5,220.2 389.0,221.4 389.5,222.6 390.0,223.8 390.5,225.0 391.0,226.3 391.5,227.6 392.0,228.9 392.5,230.3 393.0,231.8 393.5,233.3 394.0,235.0 394.5,236.7 395.0,238.7 395.5,240.7 396.0,242.9 396.5,245.0 397.0,247.0 397.5,248.9 398.0,250.7 398.5,252.3 399.0,253.9 399.5,255.3 400.0,256.8 400.5,258.2 401.0,259.6 401.5,261.1 402.0,262.5 402.5,264.0 403.0,265.3 403.5,266.6 404.0,267.6 404.5,268.5 405.0,269.3 405.5,269.9 406.0,270.3 406.5,270.6 407.0,270.7 407.5,270.8 408.0,270.8 408.5,270.7 409.0,270.5 409.5,270.2 410.0,269.9 410.5,269.6 411.0,269.3 411.5,268.9 412.0,268.6 412.5,268.3 413.0,267.9 413.5,267.6 414.0,267.3 414.5,267.0 415.0,266.7 415.5,266.5 416.0,266.4 416.5,266.3 417.0,266.3 417.5,266.4 418.0,266.6 418.5,266.9 419.0,267.4 419.5,268.0 420.0,268.7 420.5,269.6 421.0,270.6 421.5,271.7 422.0,272.9 422.5,274.2 423.0,275.7 423.5,277.2 424.0,278.8 424.5,280.4 425.0,281.9 425.5,283.2 426.0,284.3 426.5,285.3 427.0,286.2 427.5,287.0 428.0,287.7 428.5,288.3 429.0,288.8 429.5,289.3 430.0,289.6 430.5,289.9 431.0,290.0 431.5,290.0 432.0,289.9 432.5,289.7 433.0,289.4 433.5,289.1 434.0,288.7 434.5,288.2 435.0,287.6 435.5,286.8 436.0,285.9 436.5,284.9 437.0,283.9 437.5,282.8 438.0,281.8 438.5,280.9 439.0,280.1 439.5,279.4 440.0,278.8 440.5,278.2 441.0,277.7 441.5,277.2 442.0,276.9 442.5,276.7 443.0,276.5 443.5,276.3 444.0,276.1 444.5,275.8 445.0,275.2 445.5,274.4 446.0,273.4 446.5,272.1 447.0,270.7 447.5,269.2 448.0,267.6 448.5,265.9 449.0,264.0 449.5,262.0 450.0,259.9 450.5,257.9 451.0,256.0 451.5,254.4 452.0,253.0 452.5,251.8 453.0,250.6 453.5,249.6 454.0,248.5 454.5,247.5 455.0,246.6 455.5,245.6 456.0,244.7 456.5,243.8 457.0,242.9 457.5,242.0 458.0,241.1 458.5,240.4 459.0,239.9 459.5,239.6 460.0,239.5 460.5,239.6 461.0,240.0 461.5,240.5 462.0,241.2 462.5,242.0 463.0,242.8 463.5,243.7 464.0,244.5 464.5,245.4 465.0,246.3 465.5,247.3 466.0,248.2 466.5,249.0 467.0,249.7 467.5,250.1 468.0,250.4 468.5,250.4 469.0,250.2 469.5,249.9 470.0,249.5 470.5,249.1 471.0,248.8 471.5,248.5 472.0,248.5 472.5,248.6 473.0,248.9 473.5,249.4 474.0,250.0 474.5,250.7 475.0,251.4 475.5,252.1 476.0,252.7 476.5,253.3 477.0,253.6 477.5,253.7 478.0,253.5 478.5,253.1 479.0,252.4 479.5,251.6 480.0,250.6 480.5,249.6 481.0,248.6 481.5,247.7 482.0,246.9 482.5,246.0 483.0,245.1 483.5,244.3 484.0,243.6 484.5,243.0 485.0,242.7 485.5,242.7 486.0,243.0 486.5,243.6 487.0,244.6 487.5,245.7 488.0,247.0 488.5,248.4 489.0,249.8 489.5,251.4 490.0,253.1 490.5,254.8 491.0,256.3 491.5,257.5 492.0,258.3 492.5,258.6 493.0,258.6 493.5,258.1 494.0,257.5 494.5,256.7 495.0,255.8 495.5,255.0 496.0,254.4 496.5,253.8 497.0,253.5 497.5,253.4 498.0,253.4 498.5,253.5 499.0,253.7 499.5,253.9 500.0,254.1 500.5,254.4 501.0,254.6 501.5,254.8 502.0,255.0 502.5,255.2 503.0,255.3 503.5,255.5 504.0,255.7 504.5,255.8 505.0,256.0 505.5,256.2 506.0,256.3 506.5,256.5 507.0,256.6 507.5,256.8 508.0,256.9 508.5,257.1 509.0,257.2 509.5,257.4 510.0,257.6 510.5,257.7 511.0,257.9 511.5,258.1 512.0,258.2 512.5,258.4 513.0,258.7 513.5,258.9 514.0,259.2 514.5,259.5 515.0,259.8 515.5,260.2 516.0,260.5 516.5,260.8 517.0,261.0 517.5,261.2 518.0,261.3 518.5,261.2 519.0,261.0 519.5,260.5 520.0,259.9 520.5,259.2 521.0,258.5 521.5,257.8 522.0,257.3 522.5,256.7 523.0,256.2 523.5,255.8 524.0,255.3 524.5,255.0 525.0,254.6 525.5,254.4 526.0,254.2 526.5,254.1 527.0,254.1 527.5,254.2 528.0,254.3 528.5,254.5 529.0,254.7 529.5,255.0 530.0,255.2 530.5,255.4 531.0,255.6 531.5,255.7 532.0,255.8 532.5,255.8 533.0,255.8 533.5,255.6 534.0,255.5 534.5,255.3 535.0,255.1 535.5,255.0 536.0,254.9 536.5,254.9 537.0,254.9 537.5,254.9 538.0,255.0 538.5,255.1 539.0,255.3 539.5,255.4 540.0,255.6 540.5,255.7 541.0,255.8 541.5,255.9 542.0,255.9 542.5,255.9 543.0,255.9 543.5,255.8 544.0,255.6 544.5,255.4 545.0,255.1 545.5,254.8 546.0,254.4 546.5,254.0 547.0,253.6 547.5,253.2 548.0,252.7 548.5,252.2 549.0,251.8 549.5,251.3 550.0,250.8 550.5,250.2 551.0,249.7 551.5,249.1 552.0,248.5 552.5,248.0 553.0,247.5 553.5,247.0 554.0,246.6 554.5,246.2 555.0,245.9 555.5,245.6 556.0,245.4 556.5,245.2 557.0,245.0 557.5,244.8 558.0,244.6 558.5,244.4 559.0,244.3 559.5,244.2 560.0,244.1 560.5,244.1 561.0,244.1 561.5,244.1 562.0,244.1 562.5,244.2 563.0,244.4 563.5,244.6 564.0,244.9 564.5,245.2 565.0,245.6 565.5,246.0 566.0,246.4 566.5,246.8 567.0,247.2 567.5,247.6 568.0,248.0 568.5,248.3 569.0,248.7 569.5,249.0 570.0,249.2 570.5,249.5 571.0,249.8 571.5,250.1 572.0,250.4 572.5,250.6 573.0,250.9 573.5,251.1 574.0,251.3 574.5,251.5 575.0,251.6 575.5,251.7 576.0,251.8 576.5,251.9 577.0,252.1 577.5,252.4 578.0,252.7 578.5,253.1 579.0,253.6 579.5,254.1 580.0,254.5 580.5,255.0 581.0,255.5 581.5,256.0 582.0,256.4 582.5,256.8 583.0,257.2 583.5,257.6 584.0,257.9 584.5,258.1 585.0,258.4 585.5,258.6 586.0,258.7 586.5,258.8 587.0,258.8 587.5,258.9 588.0,258.9 588.5,258.9 589.0,258.9 589.5,258.8 590.0,258.8 590.5,258.7 591.0,258.7 591.5,258.6 592.0,258.5 592.5,258.4 593.0,258.3 593.5,258.2 594.0,258.1 594.5,257.9 595.0,257.7 595.5,257.5 596.0,257.3 596.5,257.1 597.0,256.7 597.5,256.4 598.0,256.0 598.5,255.6 599.0,255.1 599.5,254.7 600.0,254.2 600.5,253.8 601.0,253.3 601.5,252.9 602.0,252.5 602.5,252.0 603.0,251.6 603.5,251.1 604.0,250.6 604.5,250.1 605.0,249.7 605.5,249.3 606.0,248.9 606.5,248.6 607.0,248.3 607.5,248.1 608.0,247.9 608.5,247.9 609.0,248.0 609.5,248.1 610.0,248.4 610.5,248.7 611.0,249.1 611.5,249.5 612.0,249.8 612.5,250.2 613.0,250.5 613.5,250.8 614.0,251.0 614.5,251.2 615.0,251.2 615.5,251.2 616.0,251.1 616.5,250.9 617.0,250.7 617.5,250.4 618.0,250.1 618.5,249.8 619.0,249.5 619.5,249.2 620.0,248.9 620.5,248.6 621.0,248.4 621.5,248.1 622.0,248.0 622.5,247.9 623.0,247.8 623.5,247.9 624.0,248.0 624.5,248.3 625.0,248.6 625.5,249.0 626.0,249.4 626.5,249.9 627.0,250.4 627.5,251.0 628.0,251.5 628.5,252.0 629.0,252.5 629.5,253.0 630.0,253.4 630.5,253.7 631.0,253.9 631.5,254.0 632.0,254.0 632.5,253.9 633.0,253.7 633.5,253.5 634.0,253.2 634.5,252.8 635.0,252.4 635.5,252.0 636.0,251.5 636.5,251.1 637.0,250.6 637.5,250.2 638.0,249.7 638.5,249.3 639.0,248.9 639.5,248.6 640.0,248.2 640.5,247.8 641.0,247.4 641.5,247.0 642.0,246.6 642.5,246.2 643.0,245.8 643.5,245.4 644.0,245.1 644.5,244.8 645.0,244.5 645.5,244.2 646.0,244.1 646.5,243.9 647.0,243.9 647.5,243.9 648.0,244.0 648.5,244.2 649.0,244.4 649.5,244.6 650.0,244.8 650.5,245.0 651.0,245.2 651.5,245.3 652.0,245.4 652.5,245.3 653.0,245.3 653.5,245.2 654.0,245.0 654.5,244.9 655.0,244.7 655.5,244.5 656.0,244.3 656.5,244.1 657.0,243.8 657.5,243.6 658.0,243.4 658.5,243.2 659.0,243.0 659.5,242.8 660.0,242.6 660.5,242.5 661.0,242.4 661.5,242.3 662.0,242.2 662.5,242.2 663.0,242.3 663.5,242.4 664.0,242.6 664.5,242.9 665.0,243.2 665.5,243.6 666.0,244.0 666.5,244.5 667.0,245.0 667.5,245.5 668.0,246.1 668.5,246.7 669.0,247.2 669.5,247.8 670.0,248.4 670.5,249.0 671.0,249.7 671.5,250.3 672.0,251.0 672.5,251.7 673.0,252.4 673.5,253.1 674.0,253.6 674.5,254.0 675.0,254.3 675.5,254.4 676.0,254.4 676.5,254.3 677.0,254.1 677.5,253.8 678.0,253.5 678.5,253.1 679.0,252.7 679.5,252.2 680.0,251.8 680.5,251.3 681.0,250.8 681.5,250.3 682.0,249.7 682.5,249.2 683.0,248.6 683.5,248.0 684.0,247.4 684.5,246.7 685.0,246.1 685.5,245.5 686.0,245.1 686.5,244.9 687.0,244.7 687.5,244.6 688.0,244.5 688.5,244.4 689.0,244.4 689.5,244.4 690.0,244.3 690.5,244.3 691.0,244.3 691.5,244.3 692.0,244.4 692.5,244.4 693.0,244.5 693.5,244.5 694.0,244.7 694.5,244.9 695.0,245.3 695.5,246.0 696.0,247.0 696.5,248.5 697.0,250.4 697.5,252.4 698.0,254.3 698.5,255.6 699.0,256.3 699.5,256.4 700.0,256.1 700.5,255.7 701.0,255.3 701.5,254.8 702.0,254.5 702.5,254.2" stroke="#68b856" stroke-width="1.5" fill="none" stroke-linejoin="round"/></svg>
<div class="t" style="left:716.23px;top:161.59px;font-size:6.98px;line-height:6.98px;font-weight:bold;color:#d2d3d3;transform:scaleX(0.900);transform-origin:0 0;">+18 dB</div>
<div class="t" style="left:716.23px;top:193.59px;font-size:6.98px;line-height:6.98px;font-weight:bold;color:#d2d3d3;transform:scaleX(0.900);transform-origin:0 0;">+12 dB</div>
<div class="t" style="left:719.73px;top:225.59px;font-size:6.98px;line-height:6.98px;font-weight:bold;color:#d2d3d3;transform:scaleX(0.900);transform-origin:0 0;">+6 dB</div>
<div class="t" style="left:723.39px;top:257.59px;font-size:6.98px;line-height:6.98px;font-weight:bold;color:#d2d3d3;transform:scaleX(0.900);transform-origin:0 0;">0 dB</div>
<div class="t" style="left:721.30px;top:289.59px;font-size:6.98px;line-height:6.98px;font-weight:bold;color:#d2d3d3;transform:scaleX(0.900);transform-origin:0 0;">-6 dB</div>
<div class="t" style="left:717.81px;top:321.59px;font-size:6.98px;line-height:6.98px;font-weight:bold;color:#d2d3d3;transform:scaleX(0.900);transform-origin:0 0;">-12 dB</div>
<div class="t" style="left:717.81px;top:353.59px;font-size:6.98px;line-height:6.98px;font-weight:bold;color:#d2d3d3;transform:scaleX(0.900);transform-origin:0 0;">-18 dB</div>
<div class="t" style="left:387.60px;top:372.89px;font-size:6.98px;line-height:6.98px;font-weight:bold;color:#d4d4d4;transform:scaleX(0.918);transform-origin:0 0;">100 Hz</div>
<div class="t" style="left:527.50px;top:372.89px;font-size:6.98px;line-height:6.98px;font-weight:bold;color:#d4d4d4;transform:scaleX(0.905);transform-origin:0 0;">1 kHz</div>
<div class="t" style="left:664.00px;top:372.89px;font-size:6.98px;line-height:6.98px;font-weight:bold;color:#d4d4d4;transform:scaleX(0.932);transform-origin:0 0;">10 kHz</div>
<div style="position:absolute;left:300px;top:389.8px;width:62px;height:25.69999999999999px;box-sizing:border-box;border:1px solid #3e2a0e;border-radius:2.5px;background:#fefefe;box-shadow:inset 0 0 0 1px #d6a446,inset 0 0 1px 2px #fff3d2"></div>
<div class="t" style="left:319.40px;top:394.88px;font-size:8.28px;line-height:8.28px;font-weight:bold;color:#1e1e1e;-webkit-text-stroke:0.29px #1e1e1e;">SAFE</div>
<div class="t" style="left:306.20px;top:403.88px;font-size:8.28px;line-height:8.28px;font-weight:bold;color:#1e1e1e;transform:scaleX(0.975);transform-origin:0 0;-webkit-text-stroke:0.29px #1e1e1e;">HEADROOM</div>
<div style="position:absolute;left:369.8px;top:389.7px;width:61.19999999999999px;height:26.30000000000001px;box-sizing:border-box;border:1.8px solid #151617;border-radius:2.5px;background:linear-gradient(#c6c9cc,#bec1c4)"></div>
<div style="position:absolute;left:397.34px;top:391.5px;width:6.1200000000000045px;height:1.0px;background:#e2e4e6;opacity:.8"></div>
<div style="position:absolute;left:397.34px;top:413.2px;width:6.1200000000000045px;height:1.0px;background:#e2e4e6;opacity:.8"></div>
<div class="t" style="left:383.90px;top:398.61px;font-size:8.43px;line-height:8.43px;font-weight:bold;color:#1e1e1e;transform:scaleX(0.969);transform-origin:0 0;-webkit-text-stroke:0.30px #1e1e1e;">BYPASS</div>
<div class="t" style="left:602.40px;top:393.47px;font-size:9.59px;line-height:9.59px;font-weight:bold;color:#808487;transform:scaleX(0.894);transform-origin:0 0;-webkit-text-stroke:0.34px #808487;">MAIN MONITOR</div>
<div class="t" style="left:610.00px;top:401.87px;font-size:9.59px;line-height:9.59px;font-weight:bold;color:#808487;transform:scaleX(0.884);transform-origin:0 0;-webkit-text-stroke:0.34px #808487;">CORRECTION</div>
<div style="position:absolute;left:674.5px;top:389.5px;width:61.5px;height:26.5px;box-sizing:border-box;border:1px solid #3e2a0e;border-radius:2.5px;background:#fefefe;box-shadow:inset 0 0 0 1px #d6a446,inset 0 0 1px 2px #fff3d2"></div>
<div class="t" style="left:689.75px;top:398.51px;font-size:8.43px;line-height:8.43px;font-weight:bold;color:#1e1e1e;transform:scaleX(0.894);transform-origin:0 0;-webkit-text-stroke:0.30px #1e1e1e;">ENABLE</div>
<div style="position:absolute;left:1px;top:185px;width:336px;height:342px;background:#51595c;border-radius:4px 4px 2px 2px;box-shadow:0 0 2px rgba(0,0,0,.35)"></div>
<div style="position:absolute;left:1px;top:185px;width:336px;height:17px;background:linear-gradient(#3d4144,#393d40);border-radius:4px 4px 0 0;box-sizing:border-box;border:1px solid #161718;border-bottom:none;box-shadow:inset 0 -1px 0 #313538"></div>
<svg style="position:absolute;left:0;top:180px" width="20" height="20" viewBox="0 180 20 20"><path d="M9,190.9 L15,196.6 M15,190.9 L9,196.6" stroke="#1b1e20" stroke-width="2.6" stroke-linecap="butt"/><path d="M9,190.9 L15,196.6 M15,190.9 L9,196.6" stroke="#e2eff2" stroke-width="1.4" stroke-linecap="butt"/></svg>
<div class="t" style="left:122.75px;top:189.39px;font-size:8.87px;line-height:8.87px;font-weight:bold;color:#dedfe0;transform:scaleX(0.775);transform-origin:0 0;-webkit-text-stroke:0.31px #dedfe0;">HEADPHONE CORRECTION</div>
<div style="position:absolute;left:4.6px;top:212.6px;width:328.2px;height:310.19999999999993px;background:#43484b;border-radius:2px"></div>
<div class="t" style="left:161.80px;top:215.18px;font-size:6.40px;line-height:6.40px;font-weight:bold;color:#80848a;transform:scaleX(0.950);transform-origin:0 0;-webkit-text-stroke:0.25px #80848a;">HP 1</div>
<div class="t" style="left:11.60px;top:251.51px;font-size:6.83px;line-height:6.83px;font-weight:bold;color:#7c8083;transform:scaleX(0.906);transform-origin:0 0;-webkit-text-stroke:0.10px #7c8083;">CALIBRATION PROFILE</div>
<div style="position:absolute;left:10.4px;top:261px;width:316.6px;height:11.600000000000023px;background:linear-gradient(#1f2021,#141515);border-radius:2px;box-shadow:0 1px 1px rgba(0,0,0,.4)"></div>
<div class="t" style="left:16.00px;top:263.79px;font-size:6.98px;line-height:6.98px;font-weight:normal;color:#f0f0f0;transform:scaleX(0.928);transform-origin:0 0;">Neumann NDH 30 Wired Average</div>
<div class="t" style="left:278.50px;top:263.79px;font-size:6.98px;line-height:6.98px;font-weight:normal;color:#f0f0f0;transform:scaleX(0.890);transform-origin:0 0;">OPEN SoundID</div>
<div style="position:absolute;left:266px;top:265px;width:6px;height:5px;box-sizing:border-box;border:1px solid #e8e8e8;border-top-width:2px;border-radius:.5px;background:#1a1a1a"></div>
<svg style="position:absolute;left:4.8px;top:279px" width="328.0" height="186" viewBox="4.8 279 328.0 186"><defs><linearGradient id="fgh" x1="0" y1="366.5" x2="0" y2="465" gradientUnits="userSpaceOnUse"><stop offset="0" stop-color="#1a231a" stop-opacity="1"/><stop offset="1" stop-color="#0b0d0b" stop-opacity="1"/></linearGradient></defs><rect x="4.8" y="279" width="328.0" height="186" fill="#000"/><path d="M21.50,279V465M34.50,279V465M44.50,279V465M51.50,279V465M58.50,279V465M64.50,279V465M69.50,279V465M74.50,279V465M104.50,279V465M121.50,279V465M134.50,279V465M143.50,279V465M151.50,279V465M158.50,279V465M164.50,279V465M169.50,279V465M173.50,279V465M203.50,279V465M221.50,279V465M233.50,279V465M243.50,279V465M251.50,279V465M258.50,279V465M263.50,279V465M268.50,279V465M273.50,279V465M4.8,290.90H303.5M4.8,302.50H303.5M4.8,314.10H303.5M4.8,325.70H303.5M4.8,337.30H303.5M4.8,348.90H303.5M4.8,360.50H303.5M4.8,372.10H303.5M4.8,383.70H303.5M4.8,395.30H303.5M4.8,406.90H303.5M4.8,418.50H303.5M4.8,430.10H303.5M4.8,441.70H303.5M4.8,453.30H303.5M310,302.50H332.8M310,325.70H332.8M310,348.90H332.8M310,372.10H332.8M310,395.30H332.8M310,418.50H332.8M310,441.70H332.8" stroke="#3a3a3a" stroke-width="0.8" fill="none"/><path d="M4.0,362.7 4.5,362.4 5.0,362.0 5.5,361.6 6.0,361.2 6.5,360.8 7.0,360.4 7.5,360.0 8.0,359.6 8.5,359.2 9.0,358.8 9.5,358.4 10.0,358.0 10.5,357.6 11.0,357.3 11.5,356.9 12.0,356.5 12.5,356.2 13.0,355.8 13.5,355.5 14.0,355.2 14.5,354.9 15.0,354.6 15.5,354.3 16.0,354.0 16.5,353.7 17.0,353.5 17.5,353.3 18.0,353.0 18.5,352.8 19.0,352.6 19.5,352.4 20.0,352.2 20.5,352.0 21.0,351.9 21.5,351.7 22.0,351.5 22.5,351.3 23.0,351.2 23.5,351.0 24.0,350.9 24.5,350.8 25.0,350.6 25.5,350.5 26.0,350.4 26.5,350.3 27.0,350.2 27.5,350.2 28.0,350.1 28.5,350.0 29.0,350.0 29.5,350.0 30.0,349.9 30.5,350.0 31.0,350.0 31.5,350.0 32.0,350.1 32.5,350.2 33.0,350.3 33.5,350.5 34.0,350.7 34.5,350.9 35.0,351.2 35.5,351.5 36.0,351.8 36.5,352.2 37.0,352.6 37.5,353.0 38.0,353.4 38.5,353.9 39.0,354.5 39.5,355.0 40.0,355.6 40.5,356.3 41.0,356.9 41.5,357.6 42.0,358.2 42.5,358.9 43.0,359.6 43.5,360.3 44.0,360.9 44.5,361.6 45.0,362.3 45.5,363.0 46.0,363.7 46.5,364.5 47.0,365.3 47.5,366.2 48.0,367.0 48.5,367.8 49.0,368.7 49.5,369.5 50.0,370.3 50.5,371.0 51.0,371.8 51.5,372.4 52.0,373.0 52.5,373.6 53.0,374.0 53.5,374.4 54.0,374.7 54.5,374.8 55.0,374.9 55.5,374.8 56.0,374.6 56.5,374.4 57.0,374.1 57.5,373.8 58.0,373.5 58.5,373.1 59.0,372.8 59.5,372.5 60.0,372.3 60.5,372.2 61.0,372.1 61.5,372.0 62.0,372.0 62.5,372.1 63.0,372.2 63.5,372.3 64.0,372.4 64.5,372.6 65.0,372.7 65.5,372.9 66.0,373.1 66.5,373.2 67.0,373.4 67.5,373.6 68.0,373.8 68.5,374.0 69.0,374.1 69.5,374.3 70.0,374.4 70.5,374.6 71.0,374.7 71.5,374.8 72.0,374.9 72.5,375.0 73.0,375.0 73.5,375.1 74.0,375.1 74.5,375.1 75.0,375.2 75.5,375.2 76.0,375.2 76.5,375.2 77.0,375.2 77.5,375.2 78.0,375.2 78.5,375.2 79.0,375.2 79.5,375.2 80.0,375.1 80.5,375.1 81.0,375.1 81.5,375.0 82.0,375.0 82.5,374.9 83.0,374.9 83.5,374.8 84.0,374.8 84.5,374.7 85.0,374.7 85.5,374.6 86.0,374.6 86.5,374.5 87.0,374.4 87.5,374.3 88.0,374.2 88.5,374.2 89.0,374.1 89.5,374.0 90.0,373.9 90.5,373.7 91.0,373.6 91.5,373.5 92.0,373.4 92.5,373.3 93.0,373.2 93.5,373.0 94.0,372.9 94.5,372.8 95.0,372.7 95.5,372.6 96.0,372.4 96.5,372.3 97.0,372.2 97.5,372.1 98.0,372.0 98.5,371.8 99.0,371.7 99.5,371.6 100.0,371.5 100.5,371.4 101.0,371.3 101.5,371.2 102.0,371.1 102.5,371.0 103.0,371.0 103.5,370.9 104.0,370.8 104.5,370.7 105.0,370.7 105.5,370.6 106.0,370.5 106.5,370.5 107.0,370.4 107.5,370.4 108.0,370.3 108.5,370.3 109.0,370.2 109.5,370.2 110.0,370.1 110.5,370.1 111.0,370.0 111.5,370.0 112.0,370.0 112.5,369.9 113.0,369.9 113.5,369.9 114.0,369.8 114.5,369.8 115.0,369.8 115.5,369.8 116.0,369.8 116.5,369.7 117.0,369.7 117.5,369.7 118.0,369.7 118.5,369.7 119.0,369.7 119.5,369.7 120.0,369.7 120.5,369.7 121.0,369.7 121.5,369.7 122.0,369.7 122.5,369.8 123.0,369.8 123.5,369.8 124.0,369.9 124.5,369.9 125.0,370.0 125.5,370.0 126.0,370.1 126.5,370.2 127.0,370.2 127.5,370.3 128.0,370.4 128.5,370.5 129.0,370.6 129.5,370.6 130.0,370.7 130.5,370.8 131.0,370.9 131.5,370.9 132.0,371.0 132.5,371.1 133.0,371.1 133.5,371.2 134.0,371.2 134.5,371.3 135.0,371.3 135.5,371.3 136.0,371.3 136.5,371.2 137.0,371.1 137.5,371.0 138.0,370.8 138.5,370.6 139.0,370.4 139.5,370.1 140.0,369.8 140.5,369.6 141.0,369.4 141.5,369.3 142.0,369.2 142.5,369.2 143.0,369.2 143.5,369.3 144.0,369.3 144.5,369.4 145.0,369.5 145.5,369.6 146.0,369.8 146.5,369.9 147.0,370.0 147.5,370.2 148.0,370.3 148.5,370.5 149.0,370.6 149.5,370.8 150.0,370.9 150.5,371.1 151.0,371.2 151.5,371.3 152.0,371.5 152.5,371.6 153.0,371.7 153.5,371.8 154.0,371.9 154.5,372.0 155.0,372.0 155.5,372.0 156.0,371.9 156.5,371.8 157.0,371.7 157.5,371.5 158.0,371.2 158.5,371.0 159.0,370.7 159.5,370.5 160.0,370.4 160.5,370.3 161.0,370.3 161.5,370.4 162.0,370.6 162.5,370.8 163.0,371.2 163.5,371.6 164.0,372.0 164.5,372.4 165.0,372.8 165.5,373.1 166.0,373.5 166.5,373.8 167.0,374.0 167.5,374.2 168.0,374.4 168.5,374.5 169.0,374.6 169.5,374.7 170.0,374.7 170.5,374.7 171.0,374.7 171.5,374.8 172.0,374.8 172.5,374.7 173.0,374.7 173.5,374.7 174.0,374.7 174.5,374.7 175.0,374.6 175.5,374.6 176.0,374.5 176.5,374.5 177.0,374.4 177.5,374.4 178.0,374.3 178.5,374.3 179.0,374.2 179.5,374.1 180.0,374.1 180.5,374.0 181.0,373.9 181.5,373.8 182.0,373.7 182.5,373.6 183.0,373.4 183.5,373.3 184.0,373.1 184.5,372.8 185.0,372.6 185.5,372.3 186.0,372.0 186.5,371.8 187.0,371.5 187.5,371.2 188.0,370.9 188.5,370.6 189.0,370.2 189.5,369.9 190.0,369.6 190.5,369.2 191.0,368.9 191.5,368.5 192.0,368.1 192.5,367.8 193.0,367.4 193.5,367.1 194.0,366.8 194.5,366.4 195.0,366.1 195.5,365.8 196.0,365.4 196.5,365.1 197.0,364.9 197.5,364.6 198.0,364.3 198.5,364.0 199.0,363.8 199.5,363.5 200.0,363.3 200.5,363.0 201.0,362.8 201.5,362.5 202.0,362.3 202.5,362.1 203.0,361.8 203.5,361.6 204.0,361.4 204.5,361.2 205.0,360.9 205.5,360.7 206.0,360.4 206.5,360.2 207.0,360.0 207.5,359.7 208.0,359.5 208.5,359.3 209.0,359.1 209.5,358.9 210.0,358.7 210.5,358.6 211.0,358.4 211.5,358.3 212.0,358.2 212.5,358.1 213.0,358.0 213.5,357.9 214.0,357.8 214.5,357.7 215.0,357.6 215.5,357.5 216.0,357.4 216.5,357.4 217.0,357.3 217.5,357.3 218.0,357.2 218.5,357.2 219.0,357.2 219.5,357.3 220.0,357.4 220.5,357.6 221.0,357.9 221.5,358.3 222.0,358.8 222.5,359.3 223.0,359.9 223.5,360.6 224.0,361.5 224.5,362.4 225.0,363.5 225.5,364.6 226.0,365.8 226.5,367.1 227.0,368.4 227.5,369.6 228.0,370.9 228.5,372.1 229.0,373.2 229.5,374.2 230.0,375.2 230.5,376.2 231.0,377.2 231.5,378.1 232.0,378.7 232.5,379.1 233.0,379.2 233.5,379.2 234.0,379.1 234.5,378.8 235.0,378.5 235.5,378.1 236.0,377.6 236.5,377.1 237.0,376.6 237.5,376.1 238.0,375.5 238.5,375.0 239.0,374.4 239.5,373.9 240.0,373.4 240.5,372.8 241.0,372.3 241.5,371.8 242.0,371.4 242.5,371.0 243.0,370.7 243.5,370.6 244.0,370.5 244.5,370.6 245.0,370.8 245.5,371.1 246.0,371.3 246.5,371.5 247.0,371.6 247.5,371.4 248.0,371.1 248.5,370.6 249.0,370.0 249.5,369.3 250.0,368.6 250.5,367.9 251.0,367.2 251.5,366.5 252.0,365.9 252.5,365.3 253.0,364.9 253.5,364.7 254.0,364.7 254.5,364.8 255.0,365.2 255.5,365.7 256.0,366.3 256.5,367.0 257.0,367.7 257.5,368.4 258.0,369.1 258.5,369.7 259.0,370.1 259.5,370.6 260.0,371.0 260.5,371.4 261.0,371.9 261.5,372.5 262.0,373.3 262.5,374.8 263.0,376.7 263.5,378.8 264.0,380.2 264.5,380.7 265.0,380.5 265.5,379.5 266.0,378.1 266.5,376.5 267.0,374.8 267.5,373.1 268.0,371.5 268.5,370.1 269.0,368.9 269.5,368.0 270.0,367.3 270.5,366.7 271.0,366.3 271.5,366.0 272.0,365.7 272.5,365.4 273.0,365.0 273.5,364.7 274.0,364.2 274.5,363.6 275.0,362.9 275.5,362.2 276.0,361.5 276.5,360.7 277.0,360.0 277.5,359.3 278.0,358.6 278.5,358.0 279.0,357.4 279.5,357.0 280.0,356.7 280.5,356.7 281.0,357.1 281.5,357.9 282.0,359.2 282.5,361.0 283.0,363.1 283.5,365.2 284.0,367.0 284.5,368.0 285.0,368.3 285.5,368.3 286.0,368.7 286.5,369.9 287.0,371.6 287.5,373.2 288.0,374.2 288.5,374.6 289.0,374.2 289.5,373.3 290.0,371.9 290.5,370.2 291.0,368.4 291.5,366.5 292.0,364.6 292.5,362.8 293.0,361.0 293.5,359.5 294.0,358.1 294.5,357.0 295.0,356.3 295.5,356.0 296.0,356.1 296.5,356.4 297.0,357.0 297.5,357.7 298.0,358.6 298.5,359.5 299.0,360.3 299.5,361.2 300.0,361.8 300.5,362.3 301.0,362.2 301.5,361.5 302.0,360.1 302.5,358.0 303.0,355.4 303.5,352.9" stroke="#4f8f3f" stroke-width="1.2" fill="none" stroke-linejoin="round"/></svg>
<div style="position:absolute;left:4.8px;top:424px;width:298.7px;height:3.6000000000000227px;background:#1a181a;opacity:.35"></div>
<div class="t" style="left:313.36px;top:306.39px;font-size:5.09px;line-height:5.09px;font-weight:bold;color:#c8c8c8;transform:scaleX(0.900);transform-origin:0 0;-webkit-text-stroke:0.08px #c8c8c8;">+18 dB</div>
<div class="t" style="left:313.36px;top:329.59px;font-size:5.09px;line-height:5.09px;font-weight:bold;color:#c8c8c8;transform:scaleX(0.900);transform-origin:0 0;-webkit-text-stroke:0.08px #c8c8c8;">+12 dB</div>
<div class="t" style="left:315.90px;top:352.79px;font-size:5.09px;line-height:5.09px;font-weight:bold;color:#c8c8c8;transform:scaleX(0.900);transform-origin:0 0;-webkit-text-stroke:0.08px #c8c8c8;">+6 dB</div>
<div class="t" style="left:318.58px;top:375.99px;font-size:5.09px;line-height:5.09px;font-weight:bold;color:#c8c8c8;transform:scaleX(0.900);transform-origin:0 0;-webkit-text-stroke:0.08px #c8c8c8;">0 dB</div>
<div class="t" style="left:317.05px;top:399.19px;font-size:5.09px;line-height:5.09px;font-weight:bold;color:#c8c8c8;transform:scaleX(0.900);transform-origin:0 0;-webkit-text-stroke:0.08px #c8c8c8;">-6 dB</div>
<div class="t" style="left:314.51px;top:422.39px;font-size:5.09px;line-height:5.09px;font-weight:bold;color:#c8c8c8;transform:scaleX(0.900);transform-origin:0 0;-webkit-text-stroke:0.08px #c8c8c8;">-12 dB</div>
<div class="t" style="left:314.51px;top:445.59px;font-size:5.09px;line-height:5.09px;font-weight:bold;color:#c8c8c8;transform:scaleX(0.900);transform-origin:0 0;-webkit-text-stroke:0.08px #c8c8c8;">-18 dB</div>
<div class="t" style="left:76.50px;top:458.39px;font-size:5.09px;line-height:5.09px;font-weight:bold;color:#c8c8c8;transform:scaleX(0.893);transform-origin:0 0;-webkit-text-stroke:0.08px #c8c8c8;">100 Hz</div>
<div class="t" style="left:176.50px;top:458.39px;font-size:5.09px;line-height:5.09px;font-weight:bold;color:#c8c8c8;transform:scaleX(0.903);transform-origin:0 0;-webkit-text-stroke:0.08px #c8c8c8;">1 kHz</div>
<div class="t" style="left:275.80px;top:458.39px;font-size:5.09px;line-height:5.09px;font-weight:bold;color:#c8c8c8;transform:scaleX(0.943);transform-origin:0 0;-webkit-text-stroke:0.08px #c8c8c8;">10 kHz</div>
<div style="position:absolute;left:13.2px;top:469.6px;width:44.5px;height:19.399999999999977px;box-sizing:border-box;border:1px solid #3e2a0e;border-radius:2.5px;background:#fefefe;box-shadow:inset 0 0 0 1px #d6a446,inset 0 0 1px 2px #fff3d2"></div>
<div class="t" style="left:16.85px;top:474.00px;font-size:5.67px;line-height:5.67px;font-weight:bold;color:#1e1e1e;-webkit-text-stroke:0.09px #1e1e1e;">(-8.4 dB SAFE</div>
<div class="t" style="left:18.05px;top:479.20px;font-size:5.67px;line-height:5.67px;font-weight:bold;color:#1e1e1e;transform:scaleX(0.978);transform-origin:0 0;-webkit-text-stroke:0.09px #1e1e1e;">HEADROOM)</div>
<div style="position:absolute;left:63px;top:469.6px;width:44.7px;height:19.399999999999977px;box-sizing:border-box;border:1.8px solid #151617;border-radius:2.5px;background:linear-gradient(#c6c9cc,#bec1c4)"></div>
<div style="position:absolute;left:83.115px;top:471.40000000000003px;width:4.469999999999999px;height:1.0px;background:#e2e4e6;opacity:.8"></div>
<div style="position:absolute;left:83.115px;top:486.2px;width:4.469999999999999px;height:1.0px;background:#e2e4e6;opacity:.8"></div>
<div class="t" style="left:74.10px;top:476.16px;font-size:6.25px;line-height:6.25px;font-weight:bold;color:#1e1e1e;transform:scaleX(0.892);transform-origin:0 0;-webkit-text-stroke:0.09px #1e1e1e;">BYPASS</div>
<div class="t" style="left:237.80px;top:472.84px;font-size:6.69px;line-height:6.69px;font-weight:bold;color:#808487;transform:scaleX(0.936);transform-origin:0 0;-webkit-text-stroke:0.20px #808487;">HEADPHONE</div>
<div class="t" style="left:235.80px;top:478.84px;font-size:6.69px;line-height:6.69px;font-weight:bold;color:#808487;transform:scaleX(0.934);transform-origin:0 0;-webkit-text-stroke:0.20px #808487;">CORRECTION</div>
<div style="position:absolute;left:282.8px;top:469.6px;width:45.19999999999999px;height:19.399999999999977px;box-sizing:border-box;border:1px solid #3e2a0e;border-radius:2.5px;background:#fefefe;box-shadow:inset 0 0 0 1px #d6a446,inset 0 0 1px 2px #fff3d2"></div>
<div class="t" style="left:294.00px;top:476.16px;font-size:6.25px;line-height:6.25px;font-weight:bold;color:#1e1e1e;transform:scaleX(0.887);transform-origin:0 0;-webkit-text-stroke:0.09px #1e1e1e;">ENABLE</div>
</body></html>
